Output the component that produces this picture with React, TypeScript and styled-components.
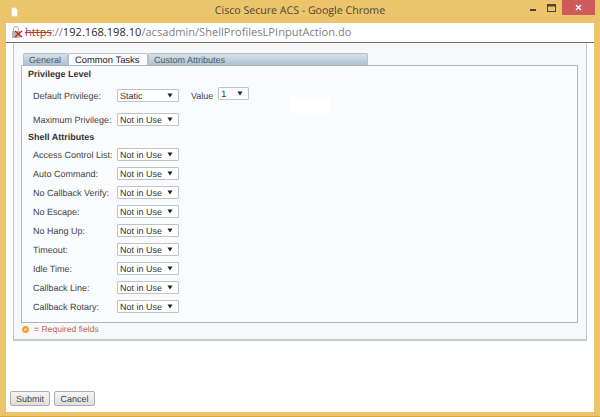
// App.tsx
import React from "react";
import styled, { createGlobalStyle } from "styled-components";

const rows = [
  "Access Control List:",
  "Auto Command:",
  "No Callback Verify:",
  "No Escape:",
  "No Hang Up:",
  "Timeout:",
  "Idle Time:",
  "Callback Line:",
  "Callback Rotary:",
];

const App = () => {
  return (
    <Window>
      <GlobalStyle />
      <TitleBar>
        <PageIcon viewBox="0 0 8 11">
          <path d="M0.5 0.5H5L7.5 3V10.5H0.5Z" fill="#fff" stroke="#d8d2c4" />
        </PageIcon>
        <Title>Cisco Secure ACS - Google Chrome</Title>
        <WindowButton>
          <svg width="6" height="7" viewBox="0 0 6 7">
            <rect y="5" width="6" height="2" fill="#444" />
          </svg>
        </WindowButton>
        <WindowButton>
          <svg width="9" height="8" viewBox="0 0 9 8">
            <rect x="0.5" y="0.5" width="8" height="7" fill="none" stroke="#444" />
            <rect x="0.5" y="0.5" width="8" height="2" fill="#444" />
          </svg>
        </WindowButton>
        <CloseButton>
          <svg width="7" height="7" viewBox="0 0 7 7">
            <path d="M1 1L6 6M6 1L1 6" stroke="#fff" strokeWidth="1.4" />
          </svg>
        </CloseButton>
      </TitleBar>

      <AddressBar>
        <LockIcon viewBox="0 0 12 13">
          <rect x="1" y="5" width="8" height="7" fill="#b9b4ae" />
          <path d="M2.5 5V3A2.5 2.5 0 0 1 7.5 3V5" fill="none" stroke="#aaa" />
          <path d="M4 5L11 11M11 5L4 11" stroke="#c02a20" strokeWidth="1.5" />
        </LockIcon>
        <Protocol>https</Protocol>
        <Faded>://</Faded>
        <Host>192.168.198.10</Host>
        <Faded>/acsadmin/ShellProfilesLPInputAction.do</Faded>
      </AddressBar>

      <Body>
        <Panel>
          <Tabs>
            <Tab $width={45}>General</Tab>
            <Tab $width={80} $active>
              Common Tasks
            </Tab>
            <Tab $width={220}>Custom Attributes</Tab>
          </Tabs>
          <TabContent>
            <SectionTitle>Privilege Level</SectionTitle>
            <Row $spaced>
              <Label>Default Privilege:</Label>
              <Select>Static</Select>
              <ValueLabel>Value</ValueLabel>
              <Select $small>1</Select>
            </Row>
            <Row $spaced>
              <Label>Maximum Privilege:</Label>
              <Select>Not in Use</Select>
            </Row>
            <SectionTitle $spaced>Shell Attributes</SectionTitle>
            <List>
              {rows.map((row) => (
                <Row key={row}>
                  <Label>{row}</Label>
                  <Select>Not in Use</Select>
                </Row>
              ))}
            </List>
            <Smudge />
          </TabContent>
          <Required>
            <svg width="7" height="7" viewBox="0 0 7 7">
              <circle cx="3.5" cy="3.5" r="3.5" fill="#eda32f" />
              <circle cx="3.5" cy="3.5" r="1.2" fill="#fbe3b4" />
            </svg>
            = Required fields
          </Required>
        </Panel>
        <Footer>
          <Button $width={40}>Submit</Button>
          <Button $width={41}>Cancel</Button>
        </Footer>
      </Body>
    </Window>
  );
};

export default App;

const Select = ({ children, $small }: { children: React.ReactNode; $small?: boolean }) => (
  <SelectBox $small={$small}>
    <span>{children}</span>
    <Arrow viewBox="0 0 6 5">
      <path d="M0.5 0.5H5.5L3 4.5Z" fill="#222" />
    </Arrow>
  </SelectBox>
);

const GlobalStyle = createGlobalStyle`
  html, body {
    margin: 0;
    padding: 0;
    background: #ecc368;
    overflow: hidden;
    text-rendering: geometricPrecision;
  }
`;

const Window = styled.div`
  position: relative;
  width: 600px;
  height: 417px;
  box-sizing: border-box;
  display: flex;
  flex-direction: column;
  background: #ecc46c;
  border-bottom: 1px solid #d8a93f;
  font-family: "Liberation Sans", Arial, sans-serif;
`;

const TitleBar = styled.div`
  height: 23px;
  flex: none;
  display: flex;
  align-items: flex-start;
  padding: 0 5px 0 11px;
  box-sizing: border-box;
  color: #4d4536;
`;

const PageIcon = styled.svg`
  width: 7px;
  height: 10px;
  margin-top: 7px;
  flex: none;
`;

const Title = styled.div`
  flex: 1;
  text-align: center;
  font-family: "Open Sans", sans-serif;
  font-size: 10.6px;
  line-height: 23px;
  padding-left: 59px;
  white-space: nowrap;
`;

const WindowButton = styled.div`
  width: 19px;
  height: 15px;
  display: flex;
  align-items: center;
  justify-content: center;
`;

const CloseButton = styled.div`
  width: 33px;
  height: 15px;
  margin-left: 1px;
  background: #cf5a5a;
  display: flex;
  align-items: center;
  justify-content: center;
`;

const AddressBar = styled.div`
  height: 20px;
  flex: none;
  margin: 0 6px;
  padding-left: 5px;
  box-sizing: border-box;
  display: flex;
  align-items: center;
  background: #fff;
  border-bottom: 1px solid #6f7070;
  font-family: "Open Sans", sans-serif;
  font-size: 11.1px;
  white-space: nowrap;
`;

const LockIcon = styled.svg`
  width: 12px;
  height: 13px;
  margin-right: 2px;
  flex: none;
`;

const Protocol = styled.span`
  color: #a33c34;
  text-decoration: line-through;
`;

const Faded = styled.span`
  color: #7f8183;
`;

const Host = styled.span`
  color: #2b2b2b;
`;

const Body = styled.div`
  flex: 1;
  margin: 0 6px 4px;
  padding: 0 7px;
  background: #fff;
  display: flex;
  flex-direction: column;
  position: relative;
`;

const Panel = styled.div`
  height: 298px;
  box-sizing: border-box;
  padding: 10px 8px 0 7px;
  background: #f6f8fa;
  border: 1px solid #c3c9ce;
  border-top: none;
  border-bottom-width: 2px;
`;

const Tabs = styled.div`
  display: flex;
  height: 12px;
  padding-left: 2px;
`;

const Tab = styled.div<{ $width: number; $active?: boolean }>`
  width: ${(p) => p.$width}px;
  box-sizing: border-box;
  padding-left: ${(p) => (p.$active ? "6px" : "5px")};
  font-size: ${(p) => (p.$active ? "9.4px" : "9px")};
  line-height: 12px;
  border: 1px solid #b4c2cc;
  border-bottom: none;
  border-radius: 2px 2px 0 0;
  color: ${(p) => (p.$active ? "#222" : "#4a5a66")};
  background: ${(p) =>
    p.$active ? "#fafbfd" : "linear-gradient(#d6e1e8, #adc1ce)"};
  ${(p) => p.$active && "margin-bottom: -1px; height: 13px; position: relative;"}
`;

const TabContent = styled.div`
  position: relative;
  height: 258px;
  box-sizing: border-box;
  padding: 2px 0 0 6px;
  background: #fafbfd;
  border: 1px solid #aeb6bc;
`;

const SectionTitle = styled.div<{ $spaced?: boolean }>`
  height: 13px;
  margin-top: ${(p) => (p.$spaced ? "2px" : "0")};
  margin-bottom: 1px;
  font-size: 9px;
  line-height: 13px;
  font-weight: bold;
  color: #333;
`;

const Row = styled.div<{ $spaced?: boolean }>`
  height: 19px;
  display: flex;
  align-items: center;
  margin-top: ${(p) => (p.$spaced ? "5px" : "0")};
`;

const List = styled.div`
  display: flex;
  flex-direction: column;
`;

const Label = styled.div`
  width: 84px;
  padding-left: 5px;
  font-size: 9px;
  color: #444;
  white-space: nowrap;
`;

const ValueLabel = styled.div`
  margin: 0 5px 0 12px;
  font-size: 9px;
  color: #444;
`;

const SelectBox = styled.div<{ $small?: boolean }>`
  width: ${(p) => (p.$small ? "31px" : "62px")};
  height: 13px;
  box-sizing: border-box;
  padding: 0 5px 0 2px;
  display: flex;
  align-items: center;
  justify-content: space-between;
  background: #fff;
  border: 1px solid #bfc3c7;
  border-radius: 1px;
  font-size: 9px;
  color: #333;
  white-space: nowrap;
  ${(p) => p.$small && "margin-bottom: 4px;"}
`;

const Arrow = styled.svg`
  width: 6px;
  height: 5px;
  flex: none;
`;

const Smudge = styled.div`
  position: absolute;
  left: 268px;
  top: 31px;
  width: 40px;
  height: 16px;
  background: #fff;
`;

const Required = styled.div`
  height: 12px;
  display: flex;
  align-items: center;
  gap: 5px;
  padding-left: 1px;
  font-size: 8.6px;
  color: #bb6a55;
`;

const Footer = styled.div`
  margin-top: auto;
  padding: 0 0 6px 4px;
  margin-left: -7px;
  display: flex;
  gap: 4px;
`;

const Button = styled.div<{ $width: number }>`
  width: ${(p) => p.$width}px;
  height: 15px;
  box-sizing: border-box;
  display: flex;
  align-items: center;
  justify-content: center;
  background: linear-gradient(#f6f6f6, #dedede);
  border: 1px solid #adadad;
  border-radius: 2px;
  font-size: 9px;
  color: #444;
`;
